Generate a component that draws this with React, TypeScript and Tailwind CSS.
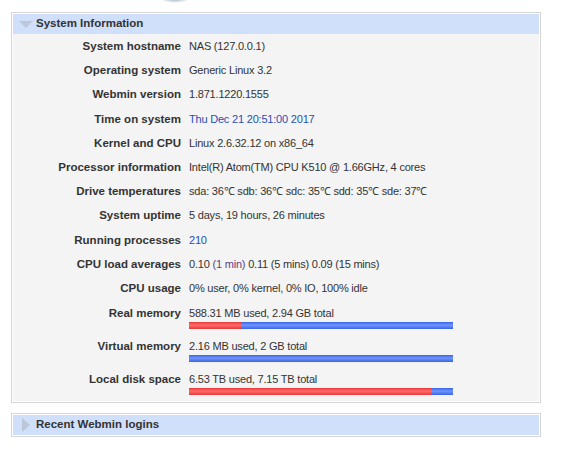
import React from 'react';

type Row = { label: string; value: React.ReactNode; bar?: number };

const link = 'text-[#1f4fb8]';

const rows: Row[] = [
  { label: 'System hostname', value: 'NAS (127.0.0.1)' },
  { label: 'Operating system', value: 'Generic Linux 3.2' },
  { label: 'Webmin version', value: '1.871.1220.1555' },
  { label: 'Time on system', value: <span className={link}>Thu Dec 21 20:51:00 2017</span> },
  { label: 'Kernel and CPU', value: 'Linux 2.6.32.12 on x86_64' },
  { label: 'Processor information', value: 'Intel(R) Atom(TM) CPU K510 @ 1.66GHz, 4 cores' },
  { label: 'Drive temperatures', value: 'sda: 36℃ sdb: 36℃ sdc: 35℃ sdd: 35℃ sde: 37℃' },
  { label: 'System uptime', value: '5 days, 19 hours, 26 minutes' },
  { label: 'Running processes', value: <span className={link}>210</span> },
  {
    label: 'CPU load averages',
    value: (
      <>
        0.10 <span className="text-[#5b3f86]">(1 min)</span> 0.11 (5 mins) 0.09 (15 mins)
      </>
    ),
  },
  { label: 'CPU usage', value: '0% user, 0% kernel, 0% IO, 100% idle' },
  { label: 'Real memory', value: '588.31 MB used, 2.94 GB total', bar: 19.7 },
  { label: 'Virtual memory', value: '2.16 MB used, 2 GB total', bar: 0 },
  { label: 'Local disk space', value: '6.53 TB used, 7.15 TB total', bar: 91.7 },
];

function Bar({ pct }: { pct: number }) {
  return (
    <div className="mt-[2px] flex h-[7px] w-[264px]">
      <div
        className="h-full bg-[linear-gradient(#e83a3a,#ff6b6b_45%,#e83a3a)]"
        style={{ width: `${pct}%` }}
      />
      <div className="h-full flex-1 bg-[linear-gradient(#3a64e6,#6f95ff_45%,#3a64e6)]" />
    </div>
  );
}

function Header({ open, title }: { open: boolean; title: string }) {
  return (
    <div className="flex h-[20px] items-center bg-[#d0dffa]">
      <div className="flex w-[23px] justify-center pl-[3px]">
        {open ? (
          <svg width="14" height="7" viewBox="0 0 14 7">
            <path d="M0 0 L14 0 L7 7 Z" fill="#bcc7da" />
          </svg>
        ) : (
          <svg width="8" height="14" viewBox="0 0 8 14">
            <path d="M0 0 L8 7 L0 14 Z" fill="#bcc7da" />
          </svg>
        )}
      </div>
      <span className="text-[11.5px] font-bold text-[#333]">{title}</span>
    </div>
  );
}

export default function App() {
  return (
    <div className="relative min-h-[457px] bg-white px-[11px] pt-[12px] font-['Liberation_Sans',Arial,sans-serif] text-[12px] text-[#333]">
      <div className="absolute left-[160px] top-[-6px] h-[9px] w-[30px] rounded-full bg-[radial-gradient(#8f9fb8,#ffffff_70%)]" />

      <div className="w-[530px] border border-[#d6d6d6] bg-white p-px">
        <Header open title="System Information" />
        <div className="bg-[#f4f4f4] pb-[2px]">
          {rows.map(r => (
            <div
              key={r.label}
              className={`grid grid-cols-[168px_1fr] gap-x-[8px] leading-[14px] ${r.bar !== undefined ? 'pb-[4px] pt-[6px]' : 'h-[24.2px] items-center'}`}
            >
              <div className="text-right text-[11.5px] font-bold">{r.label}</div>
              <div>
                <div className="text-[11px] tracking-[-0.2px]">{r.value}</div>
                {r.bar !== undefined && <Bar pct={r.bar} />}
              </div>
            </div>
          ))}
        </div>
      </div>

      <div className="mt-[10px] w-[530px] border border-[#d6d6d6] bg-white p-px">
        <Header open={false} title="Recent Webmin logins" />
      </div>
    </div>
  );
}
